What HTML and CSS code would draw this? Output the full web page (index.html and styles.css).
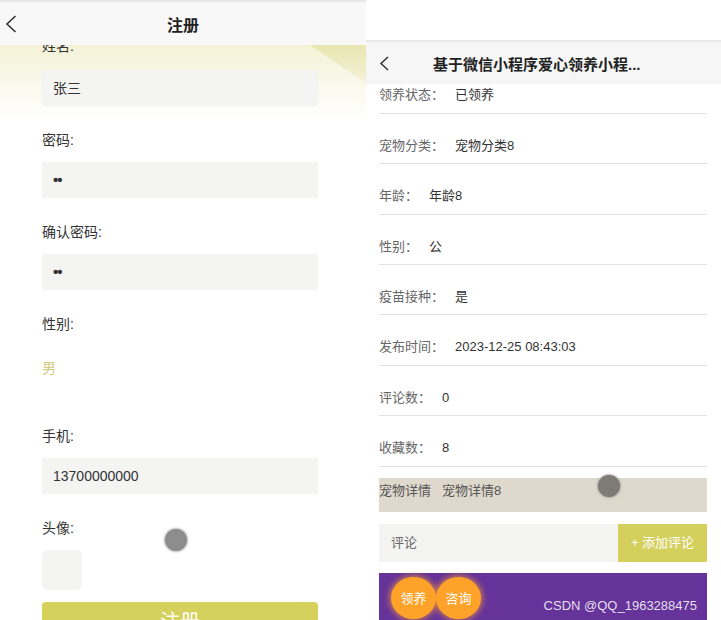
FILE: index.html
```html
<!DOCTYPE html>
<html lang="zh-CN">
<head>
    <meta charset="UTF-8">
    <meta name="viewport" content="width=device-width, initial-scale=1.0">
    <title>注册 / 宠物详情</title>
    <link rel="stylesheet" href="styles.css">
</head>
<body>

<div class="screens">

    <!-- 注册页 -->
    <section class="phone reg">
        <header class="nav">
            <svg class="back" width="12" height="18" viewBox="0 0 12 18"><path d="M10.5 1 L2 9 L10.5 17" fill="none" stroke="#333" stroke-width="1.6"/></svg>
            <h1>注册</h1>
        </header>
        <div class="page">
            <div class="form">
                <div class="field">
                    <label>姓名:</label>
                    <div class="input">张三</div>
                </div>
                <div class="field">
                    <label>密码:</label>
                    <div class="input pwd">••</div>
                </div>
                <div class="field">
                    <label>确认密码:</label>
                    <div class="input pwd">••</div>
                </div>
                <div class="field">
                    <label>性别:</label>
                    <div class="radio">男</div>
                </div>
                <div class="field">
                    <label>手机:</label>
                    <div class="input">13700000000</div>
                </div>
                <div class="field">
                    <label>头像:</label>
                    <div class="avatar"></div>
                </div>
                <div class="submit">注册</div>
            </div>
        </div>
        <span class="touch touch-reg"></span>
    </section>

    <!-- 详情页 -->
    <section class="phone detail">
        <div class="status"></div>
        <header class="nav">
            <svg class="back" width="10" height="15" viewBox="0 0 10 15"><path d="M9 1 L2 7.5 L9 14" fill="none" stroke="#333" stroke-width="1.5"/></svg>
            <h1>基于微信小程序爱心领养小程...</h1>
        </header>
        <div class="page">
            <ul class="info">
                <li><span class="k">领养状态：</span>已领养</li>
                <li><span class="k">宠物分类：</span>宠物分类8</li>
                <li><span class="k">年龄：</span>年龄8</li>
                <li><span class="k">性别：</span>公</li>
                <li><span class="k">疫苗接种：</span>是</li>
                <li><span class="k">发布时间：</span>2023-12-25 08:43:03</li>
                <li><span class="k">评论数：</span>0</li>
                <li><span class="k">收藏数：</span>8</li>
            </ul>
            <div class="desc"><span class="k">宠物详情</span>宠物详情8</div>
            <div class="comment">
                <div class="comment-input">评论</div>
                <div class="comment-btn">+ 添加评论</div>
            </div>
            <div class="actions">
                <span class="circle">领养</span>
                <span class="circle">咨询</span>
                <span class="watermark">CSDN @QQ_1963288475</span>
            </div>
        </div>
        <span class="touch touch-detail"></span>
    </section>

</div>

</body>
</html>
```

FILE: styles.css
```css
body {
    margin: 0;
    font-family: "Liberation Sans", "Noto Sans CJK SC", sans-serif;
    background: #fff;
    color: #333;
}

.screens {
    display: flex;
    width: 721px;
    height: 620px;
    overflow: hidden;
}

.phone {
    position: relative;
    display: flex;
    flex-direction: column;
    overflow: hidden;
    height: 620px;
}

.nav h1 {
    margin: 0;
    font-weight: bold;
    color: #222;
    white-space: nowrap;
}

/* 注册页 */
.reg {
    width: 366px;
}

.reg .nav {
    height: 43px;
    flex-shrink: 0;
    border-top: 2px solid #e8e8e8;
    background: #f8f8f8;
    display: grid;
    grid-template-columns: 40px 1fr 40px;
    align-items: center;
}

.reg .back {
    margin-left: 5px;
}

.reg .nav h1 {
    font-size: 16px;
    text-align: center;
}

.reg .page {
    flex: 1;
    overflow: hidden;
    background:
        linear-gradient(to bottom, rgba(255, 255, 255, 0) 0, #fff 75px),
        linear-gradient(to top right, transparent 50%, #e9e6b0 50%) right top / 56px 38px no-repeat,
        #f4f2d6;
}

.form {
    margin-top: -9px;
    padding: 0 48px 0 42px;
}

.field label {
    display: block;
    height: 20px;
    line-height: 20px;
    font-size: 14px;
    color: #333;
    margin-bottom: 12px;
}

.field:first-child label {
    margin-bottom: 14px;
}

.input {
    height: 36px;
    line-height: 36px;
    padding: 0 11px;
    margin-bottom: 24px;
    background: #f4f4f2;
    font-size: 14px;
    color: #333;
}

.pwd {
    font-size: 15px;
    font-weight: bold;
    letter-spacing: -1px;
}

.radio {
    height: 44px;
    line-height: 44px;
    margin-bottom: 36px;
    font-size: 14px;
    color: #d3cc80;
}

.avatar {
    width: 40px;
    height: 40px;
    margin-bottom: 12px;
    border-radius: 6px;
    background: #f4f4f2;
}

.submit {
    height: 40px;
    line-height: 40px;
    border-radius: 4px;
    background: #d6d05c;
    color: #fff;
    font-size: 20px;
    text-align: center;
}

/* 触摸点 */
.touch {
    position: absolute;
    width: 22px;
    height: 22px;
    border-radius: 50%;
    background: #8d8d8d;
    box-shadow: 0 0 2px 1px rgba(140, 140, 140, 0.6);
}

.touch-reg {
    left: 165px;
    top: 529px;
}

.touch-detail {
    left: 232px;
    top: 475px;
    background: #7e7b76;
}

/* 详情页 */
.detail {
    width: 355px;
}

.status {
    height: 40px;
    flex-shrink: 0;
    border-bottom: 2px solid #e8e8e8;
}

.detail .nav {
    height: 42px;
    flex-shrink: 0;
    background: #f6f6f6;
    display: flex;
    align-items: center;
    padding-left: 13px;
}

.detail .nav h1 {
    margin-left: 44px;
    font-size: 15px;
}

.detail .page {
    flex: 1;
    overflow: hidden;
    padding: 0 14px 0 13px;
}

.info {
    list-style: none;
    margin: -20.6px 0 0;
    padding: 0;
}

.info li {
    padding: 22px 0 7.4px;
    line-height: 20px;
    font-size: 13px;
    color: #333;
    border-bottom: 1px solid #e2e2e2;
}

.k {
    color: #666;
    margin-right: 11px;
}

.desc {
    margin-top: 11px;
    height: 31px;
    padding-top: 3px;
    line-height: 20px;
    background: #dfd8cc;
    font-size: 13px;
    color: #555;
}

.desc .k {
    color: #555;
}

.comment {
    display: flex;
    height: 38px;
    margin-top: 12px;
    line-height: 38px;
    font-size: 13px;
}

.comment-input {
    flex: 1;
    padding-left: 12px;
    background: #f4f4f2;
    color: #666;
}

.comment-btn {
    width: 89px;
    text-align: center;
    background: #d5d05c;
    color: #fff;
}

.actions {
    position: relative;
    display: flex;
    height: 60px;
    margin-top: 11px;
    padding: 4px 0 0 12px;
    background: #65339a;
}

.circle {
    display: flex;
    justify-content: center;
    align-items: center;
    width: 45px;
    height: 42px;
    border-radius: 50%;
    background: #ffa229;
    box-shadow: 0 0 6px 1px rgba(255, 162, 41, 0.8);
    color: #fff;
    font-size: 13px;
}

.watermark {
    position: absolute;
    right: 10px;
    top: 25px;
    line-height: 16px;
    font-size: 13px;
    color: rgba(255, 255, 255, 0.85);
}
```
